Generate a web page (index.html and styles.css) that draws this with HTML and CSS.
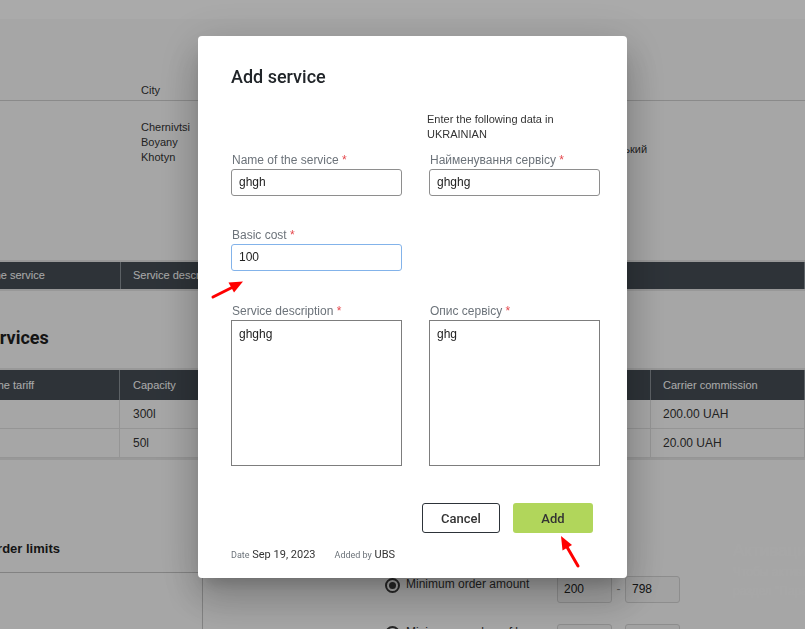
FILE: index.html
```html
<!DOCTYPE html>
<html lang="en">
<head>
    <meta charset="UTF-8">
    <meta name="viewport" content="width=device-width, initial-scale=1.0">
    <title>Add service</title>
    <link rel="stylesheet" href="styles.css">
</head>
<body>
    <div class="page">
        <div class="topbar"></div>

        <!-- Locations -->
        <div class="loc-head"><span class="loc-city">City</span></div>
        <div class="loc-body">
            <div class="loc-cities">Chernivtsi<br>Boyany<br>Khotyn</div>
            <div class="loc-region">Чернівецький</div>
        </div>

        <!-- Services table head -->
        <div class="tbl tbl-services">
            <div class="th">Name of the service</div>
            <div class="th">Service description</div>
        </div>

        <h2 class="section-title">Services</h2>

        <div class="tbl tbl-tariffs">
            <div class="th">Name of the tariff</div>
            <div class="th">Capacity</div>
            <div class="th">Carrier commission</div>

            <div class="td">Bag</div>
            <div class="td">300l</div>
            <div class="td">200.00 UAH</div>

            <div class="td">Bag</div>
            <div class="td">50l</div>
            <div class="td">20.00 UAH</div>
        </div>

        <h3 class="limits-title">Order limits</h3>
        <div class="limits">
            <div class="limits-side"></div>
            <div class="limits-main">
                <div class="limit-row">
                    <span class="radio checked"></span>
                    <span class="limit-label">Minimum order amount</span>
                    <span class="limit-input">200</span>
                    <span class="limit-dash">-</span>
                    <span class="limit-input">798</span>
                </div>
                <div class="limit-row">
                    <span class="radio"></span>
                    <span class="limit-label">Minimum number of bags</span>
                    <span class="limit-input"></span>
                    <span class="limit-dash">-</span>
                    <span class="limit-input"></span>
                </div>
            </div>
        </div>
    </div>

    <div class="watermark">
        <div class="wm-title">Активация Windows</div>
        <div>Чтобы активировать Windows, перейдите в</div>
        <div>раздел "Параметры".</div>
    </div>

    <div class="backdrop"></div>

    <!-- Dialog -->
    <div class="dialog-wrap">
        <div class="dialog">
            <h1 class="dialog-title">Add service</h1>

            <div class="row">
                <div class="col"></div>
                <div class="col hint">Enter the following data in<br>UKRAINIAN</div>
            </div>

            <div class="row">
                <div class="col field">
                    <label>Name of the service <span class="req">*</span></label>
                    <div class="input">ghgh</div>
                </div>
                <div class="col field">
                    <label>Найменування сервісу <span class="req">*</span></label>
                    <div class="input">ghghg</div>
                </div>
            </div>

            <div class="row row-cost">
                <div class="col field">
                    <label>Basic cost <span class="req">*</span></label>
                    <div class="input focused">100</div>
                </div>
            </div>

            <div class="row row-desc">
                <div class="col field">
                    <label>Service description <span class="req">*</span></label>
                    <div class="textarea">ghghg</div>
                </div>
                <div class="col field">
                    <label>Опис сервісу <span class="req">*</span></label>
                    <div class="textarea">ghg</div>
                </div>
            </div>

            <div class="actions">
                <button class="btn btn-cancel">Cancel</button>
                <button class="btn btn-add">Add</button>
            </div>

            <div class="meta">
                <span><small>Date</small> Sep 19, 2023</span>
                <span><small>Added by</small> UBS</span>
            </div>
        </div>
    </div>

    <!-- Annotation arrows -->
    <svg class="arrows" width="805" height="629" viewBox="0 0 805 629">
        <line x1="213" y1="297" x2="232" y2="287.5" stroke="#ff0000" stroke-width="3" stroke-linecap="round"/>
        <polygon points="243,281.5 234,292.5 228.5,282.5" fill="#ff0000"/>
        <line x1="578" y1="566" x2="567" y2="547" stroke="#ff0000" stroke-width="3" stroke-linecap="round"/>
        <polygon points="561,536 572,545 562.5,550.5" fill="#ff0000"/>
    </svg>
</body>
</html>
```

FILE: styles.css
```css
* {
    margin: 0;
    padding: 0;
    box-sizing: border-box;
}

body {
    width: 805px;
    height: 629px;
    overflow: hidden;
    background-color: #fafafa;
    font-family: 'Liberation Sans', Arial, sans-serif;
    color: #333;
}

/* Page behind the dialog (scrolled to the right a bit) */
.page {
    width: 865px;
    margin-left: -60px;
}

.topbar {
    height: 19px;
    background: #ffffff;
}

.loc-head {
    height: 82px;
    display: flex;
    align-items: flex-end;
    padding: 0 0 2px 201px;
    border-bottom: 1px solid #cfcfcf;
    font-size: 11px;
    line-height: 15px;
}

.loc-body {
    height: 159px;
    display: flex;
    font-size: 11px;
    line-height: 15px;
}

.loc-cities {
    width: 638px;
    padding: 19px 0 0 201px;
}

.loc-region {
    padding-top: 41px;
}

/* Tables */
.tbl {
    display: grid;
    grid-template-columns: 180px 531px 154px;
    font-size: 12px;
}

.th {
    height: 27px;
    line-height: 27px;
    padding-left: 12px;
    background: #454d55;
    color: #ffffff;
    font-size: 11px;
    border-right: 1px solid #8b9298;
    white-space: nowrap;
    overflow: hidden;
}

.th:first-child {
    padding-left: 7px;
}

.tbl-services {
    grid-template-columns: 181px 684px;
    border-top: 2px solid #e4e4e4;
    border-bottom: 2px solid #e4e4e4;
}

.tbl-tariffs {
    border-top: 2px solid #e4e4e4;
    border-bottom: 2px solid #e4e4e4;
}

.tbl-tariffs .th {
    height: 30px;
    line-height: 30px;
}

.tbl-tariffs .th:first-child {
    padding-left: 10px;
}

.tbl-tariffs .th:nth-child(2) {
    padding-left: 13px;
}

.td {
    height: 29px;
    line-height: 28px;
    padding-left: 12px;
    border-bottom: 1px solid #e0e0e0;
    border-right: 1px solid #e0e0e0;
}

.td:nth-child(3n+2) {
    padding-left: 13px;
}

.section-title {
    margin: 36px 0 19px 39px;
    font-family: Roboto, 'Liberation Sans', Arial, sans-serif;
    font-size: 18px;
    line-height: 22px;
    font-weight: bold;
    color: #1e1e1e;
}

.limits-title {
    margin: 81px 0 15px 47px;
    font-size: 13px;
    line-height: 16px;
    font-weight: bold;
    color: #1e1e1e;
}

.limits {
    display: flex;
    width: 680px;
    height: 80px;
    border-top: 1px solid #c4c4c4;
}

.limits-side {
    flex-shrink: 0;
    width: 263px;
    border-right: 1px solid #c4c4c4;
}

.limits-main {
    flex-shrink: 0;
    padding: 3px 0 0 182px;
}

.limit-row {
    display: flex;
    align-items: flex-start;
    height: 48px;
}

.radio {
    width: 15px;
    height: 15px;
    margin: 2px 6px 0 0;
    border: 2px solid #3a3a3a;
    border-radius: 50%;
    position: relative;
}

.radio.checked::after {
    content: '';
    position: absolute;
    top: 2px;
    left: 2px;
    width: 7px;
    height: 7px;
    border-radius: 50%;
    background: #3a3a3a;
}

.limit-label {
    width: 151px;
    font-size: 12px;
    line-height: 16px;
    color: #333;
}

.limit-input {
    width: 55px;
    height: 27px;
    line-height: 25px;
    padding-left: 6px;
    border: 1px solid #d4d4d4;
    border-radius: 3px;
    background: #f4f4f4;
    font-size: 12px;
    color: #222;
}

.limit-dash {
    width: 13px;
    text-align: center;
    line-height: 27px;
    font-size: 12px;
    color: #888;
}

.watermark {
    position: fixed;
    left: 733px;
    top: 539px;
    white-space: nowrap;
    color: rgba(255, 255, 255, 0.12);
    font-size: 12px;
    line-height: 19px;
}

.watermark .wm-title {
    font-size: 17px;
    line-height: 24px;
}

/* Dialog */
.backdrop {
    position: fixed;
    inset: 0;
    background: rgba(0, 0, 0, 0.335);
}

.dialog-wrap {
    position: fixed;
    inset: 0;
    padding: 36px 0 0 198px;
}

.dialog {
    width: 429px;
    height: 542px;
    padding: 29px 27px 0 33px;
    background: #ffffff;
    border-radius: 4px;
    font-family: Roboto, 'Liberation Sans', Arial, sans-serif;
    box-shadow:
        0 11px 15px -7px rgba(0, 0, 0, 0.2),
        0 24px 38px 3px rgba(0, 0, 0, 0.14),
        0 9px 46px 8px rgba(0, 0, 0, 0.12);
}

.dialog-title {
    font-size: 18px;
    line-height: 22px;
    font-weight: 500;
    color: #212529;
    margin-top: 1px;
}

.row {
    display: flex;
    gap: 27px;
}

.col {
    width: 171px;
}

.hint {
    margin: 24px 0 9px -2px;
    font-family: 'Liberation Sans', Arial, sans-serif;
    font-size: 11px;
    line-height: 15px;
    color: #333;
}

.field label {
    display: block;
    padding: 1px 0 0 1px;
    margin-bottom: 1px;
    font-family: 'Liberation Sans', Arial, sans-serif;
    font-size: 12px;
    line-height: 16px;
    color: #6c737a;
}

.req {
    color: #e5484d;
}

.input {
    height: 27px;
    line-height: 25px;
    padding-left: 7px;
    border: 1px solid #8e8e8e;
    border-radius: 3px;
    font-family: 'Liberation Sans', Arial, sans-serif;
    font-size: 12px;
    color: #222;
}

.input.focused {
    border-color: #83b3ea;
}

.row-cost {
    margin-top: 30px;
}

.row-desc {
    margin-top: 31px;
}

.textarea {
    height: 146px;
    padding: 6px 7px;
    border: 1px solid #7d7d7d;
    font-family: 'Liberation Sans', Arial, sans-serif;
    font-size: 12px;
    line-height: 15px;
    color: #222;
}

.actions {
    display: flex;
    justify-content: flex-end;
    gap: 13px;
    margin: 37px 7px 0 0;
}

.btn {
    height: 30px;
    border-radius: 3px;
    font-family: Roboto, 'Liberation Sans', Arial, sans-serif;
    font-size: 13px;
    font-weight: 500;
    color: #333;
    cursor: pointer;
}

.btn-cancel {
    width: 78px;
    background: #ffffff;
    border: 1px solid #2d3339;
}

.btn-add {
    width: 80px;
    background: #b1d65b;
    border: none;
}

.meta {
    display: flex;
    gap: 19px;
    margin-top: 15px;
    font-size: 11px;
    line-height: 14px;
    color: #333;
}

.meta small {
    font-size: 9px;
    color: #6c737a;
}

.arrows {
    position: fixed;
    left: 0;
    top: 0;
    pointer-events: none;
}
```
